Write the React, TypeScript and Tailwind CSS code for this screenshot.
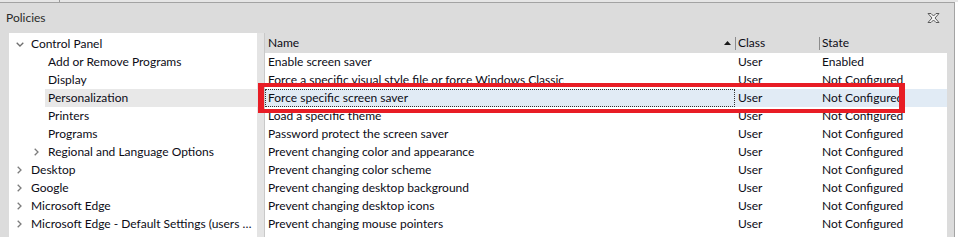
import { ReactNode } from "react";

type TreeItem = { label: string; level: number; chevron?: "open" | "closed"; selected?: boolean };

const tree: TreeItem[] = [
  { label: "Control Panel", level: 0, chevron: "open" },
  { label: "Add or Remove Programs", level: 1 },
  { label: "Display", level: 1 },
  { label: "Personalization", level: 1, selected: true },
  { label: "Printers", level: 1 },
  { label: "Programs", level: 1 },
  { label: "Regional and Language Options", level: 1, chevron: "closed" },
  { label: "Desktop", level: 0, chevron: "closed" },
  { label: "Google", level: 0, chevron: "closed" },
  { label: "Microsoft Edge", level: 0, chevron: "closed" },
  { label: "Microsoft Edge - Default Settings (users can override)", level: 0, chevron: "closed" },
  { label: "Microsoft Edge WebView2 Settings", level: 0, chevron: "closed" },
];

const policies = [
  { name: "Enable screen saver", state: "Enabled" },
  { name: "Force a specific visual style file or force Windows Classic", state: "Not Configured" },
  { name: "Force specific screen saver", state: "Not Configured", selected: true },
  { name: "Load a specific theme", state: "Not Configured" },
  { name: "Password protect the screen saver", state: "Not Configured" },
  { name: "Prevent changing color and appearance", state: "Not Configured" },
  { name: "Prevent changing color scheme", state: "Not Configured" },
  { name: "Prevent changing desktop background", state: "Not Configured" },
  { name: "Prevent changing desktop icons", state: "Not Configured" },
  { name: "Prevent changing mouse pointers", state: "Not Configured" },
];

function Chevron({ open }: { open: boolean }) {
  return open ? (
    <svg width="8" height="5" viewBox="0 0 8 5" className="text-[#6f6f6f]">
      <path d="M0.7 0.7 L4 4 L7.3 0.7" fill="none" stroke="currentColor" strokeWidth="1.3" />
    </svg>
  ) : (
    <svg width="5" height="8" viewBox="0 0 5 8" className="text-[#7c7c7c]">
      <path d="M0.7 0.7 L4 4 L0.7 7.3" fill="none" stroke="currentColor" strokeWidth="1.3" />
    </svg>
  );
}

function CloseIcon() {
  return (
    <svg width="13" height="10" viewBox="0 0 13 10">
      <path
        d="M1 0.5 H4 L6.5 3 L9 0.5 H12 L8 5 L12 9.5 H9 L6.5 7 L4 9.5 H1 L5 5 Z"
        fill="#f4f4f4"
        stroke="#5a5a5a"
        strokeWidth="1"
        strokeLinejoin="round"
      />
    </svg>
  );
}

function HeaderCell({ children, className }: { children: ReactNode; className: string }) {
  return (
    <div className={`flex items-center h-full ${className}`}>
      <span className="w-px h-[13px] bg-[#8c8c8c] mr-[2px]" />
      {children}
    </div>
  );
}

export default function App() {
  return (
    <div className="w-[958px] h-[243px] bg-white overflow-hidden relative font-['Lato','Segoe_UI',sans-serif] text-[12px] text-[#0c0c16]">
      {/* strip above the window */}
      <div className="h-[2px] bg-[#e6e6e6] flex">
        <span className="ml-[59px] w-px h-[2px] bg-[#9a9a9a]" />
      </div>

      <div className="w-[955px] h-[235px] bg-[#dcdcdc] border-t border-r border-[#a3a3a3] flex flex-col">
        {/* title */}
        <div className="h-[30px] flex items-center justify-between pl-[6px] pr-[14px]">
          <span className="text-[#2a2a2a]">Policies</span>
          <CloseIcon />
        </div>

        <div className="flex flex-1 min-h-0">
          {/* category tree */}
          <div className="ml-[9px] w-[248px] bg-white overflow-hidden pt-[2px]">
            {tree.map((item) => (
              <div key={item.label} className={`flex h-[18px] items-center ${item.level === 1 ? "pl-[19px]" : "pl-[2px]"}`}>
                <div className="w-[17px] shrink-0 h-full flex items-center justify-center">
                  {item.chevron && <Chevron open={item.chevron === "open"} />}
                </div>
                <div
                  className={`flex-1 min-w-0 h-full leading-[18px] pl-[3px] pr-[4px] whitespace-nowrap overflow-hidden text-ellipsis ${
                    item.selected ? "bg-[#e8e8e8]" : ""
                  }`}
                >
                  {item.label}
                </div>
              </div>
            ))}
          </div>

          <div className="w-[7px] bg-[#e4e4e4]" />

          {/* policy list */}
          <div className="w-[683px] bg-white border-l border-[#c9c9c9] flex flex-col">
            <div className="h-[20px] bg-[#dcdcdc] flex items-center">
              <div className="w-[470px] h-full flex items-center justify-between pl-[3px] pr-[4px]">
                <span>Name</span>
                <svg width="7" height="4" viewBox="0 0 7 4">
                  <path d="M0 4 L3.5 0 L7 4 Z" fill="#1a1a1a" />
                </svg>
              </div>
              <HeaderCell className="w-[84px]">Class</HeaderCell>
              <HeaderCell className="flex-1">State</HeaderCell>
            </div>
            {policies.map((p) => (
              <div key={p.name} className={`flex h-[18px] items-center ${p.selected ? "bg-[#e1ebf5]" : ""}`}>
                <div
                  className={`w-[470px] h-full flex items-center pl-[2px] whitespace-nowrap border ${
                    p.selected ? "border-dotted border-[#333]" : "border-transparent"
                  }`}
                >
                  {p.name}
                </div>
                <div className="w-[84px] pl-[3px]">User</div>
                <div className="flex-1 pl-[3px]">{p.state}</div>
              </div>
            ))}
          </div>

          {/* scrollbar gutter */}
          <div className="w-[7px]" />
        </div>
      </div>

      {/* red highlight */}
      <div className="absolute left-[258px] top-[83px] w-[647px] h-[30px] border-y-[4px] border-x-[6px] border-[#e81d25]" />
    </div>
  );
}
